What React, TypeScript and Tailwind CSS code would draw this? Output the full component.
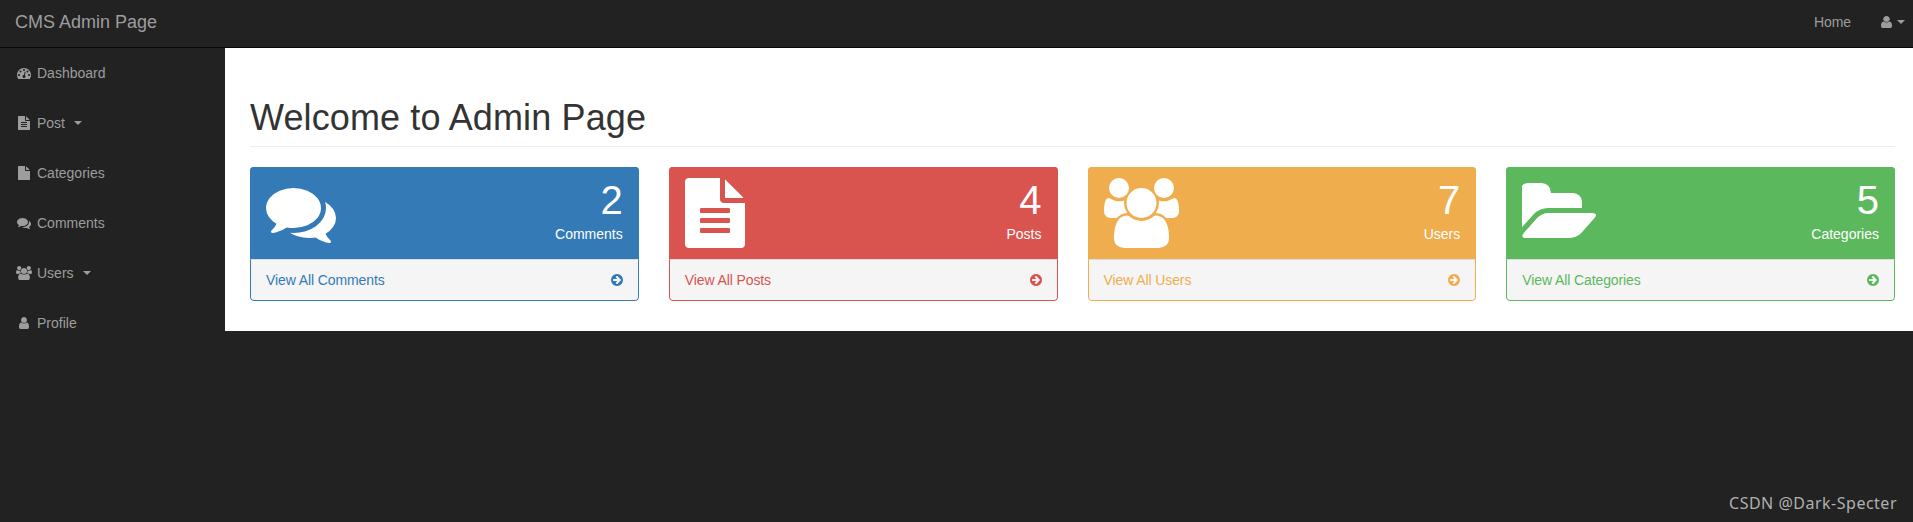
import type { ReactNode } from 'react';

// glyphs from font awesome 4, drawn on the 1792 unit em
const paths = {
  dashboard:
    'M384 1152q0-53-37.5-90.5t-90.5-37.5-90.5 37.5-37.5 90.5 37.5 90.5 90.5 37.5 90.5-37.5 37.5-90.5zm192-448q0-53-37.5-90.5t-90.5-37.5-90.5 37.5-37.5 90.5 37.5 90.5 90.5 37.5 90.5-37.5 37.5-90.5zm428 481l101-382q6-26-7.5-48.5t-38.5-29.5-48 6.5-30 39.5l-101 382q-60 5-107 43.5t-63 98.5q-20 77 20 146t117 89 146-20 89-117q16-60-6-117t-72-91zm660-33q0-53-37.5-90.5t-90.5-37.5-90.5 37.5-37.5 90.5 37.5 90.5 90.5 37.5 90.5-37.5 37.5-90.5zm-640-640q0-53-37.5-90.5t-90.5-37.5-90.5 37.5-37.5 90.5 37.5 90.5 90.5 37.5 90.5-37.5 37.5-90.5zm448 192q0-53-37.5-90.5t-90.5-37.5-90.5 37.5-37.5 90.5 37.5 90.5 90.5 37.5 90.5-37.5 37.5-90.5zm320 448q0 261-141 483-19 29-54 29h-1402q-35 0-54-29-141-221-141-483 0-182 71-348t191-286 286-191 348-71 348 71 286 191 191 286 71 348z',
  fileText:
    'M1596 476q14 14 28 36h-472v-472q22 14 36 28zm-476 164h544v1056q0 40-28 68t-68 28h-1344q-40 0-68-28t-28-68v-1600q0-40 28-68t68-28h800v544q0 40 28 68t68 28zm160 736v-64q0-14-9-23t-23-9h-704q-14 0-23 9t-9 23v64q0 14 9 23t23 9h704q14 0 23-9t9-23zm0-256v-64q0-14-9-23t-23-9h-704q-14 0-23 9t-9 23v64q0 14 9 23t23 9h704q14 0 23-9t9-23zm0-256v-64q0-14-9-23t-23-9h-704q-14 0-23 9t-9 23v64q0 14 9 23t23 9h704q14 0 23-9t9-23z',
  file:
    'M1152 512v-472q22 14 36 28l408 408q14 14 28 36h-472zm-128 32q0 40 28 68t68 28h544v1056q0 40-28 68t-68 28h-1344q-40 0-68-28t-28-68v-1600q0-40 28-68t68-28h800v544z',
  comments:
    'M1408 768q0 139-94 257t-256.5 186.5-353.5 68.5q-86 0-176-16-124 88-278 128-36 9-86 16h-3q-11 0-20.5-8t-11.5-21q-1-3-1-6.5t.5-6.5 2-6l2.5-5 3.5-5.5 4-5 4.5-5 4-4.5q5-6 23-25t26-29.5 22.5-29 25-38.5 20.5-44q-124-72-195-177t-71-224q0-139 94-257t256.5-186.5 353.5-68.5 353.5 68.5 256.5 186.5 94 257zm384 256q0 120-71 224.5t-195 176.5q10 24 20.5 44t25 38.5 22.5 29 26 29.5 23 25q1 1 4 4.5t4.5 5 4 5 3.5 5.5l2.5 5 2 6 .5 6.5-1 6.5q-3 14-13 22t-22 7q-50-7-86-16-154-40-278-128-90 16-176 16-271 0-472-132 58 4 88 4 161 0 309-45t264-129q125-92 192-212t67-254q0-77-23-152 129 71 204 178t75 230z',
  users:
    'M593 896q-162 5-265 128h-134q-82 0-138-40.5t-56-118.5q0-353 124-353 6 0 43.5 21t97.5 42.5 119 21.5q67 0 133-23-5 37-5 66 0 139 81 256zm1071 637q0 120-73 189.5t-194 69.5h-874q-121 0-194-69.5t-73-189.5q0-53 3.5-103.5t14-109 26.5-108.5 43-97.5 62-81 85.5-53.5 111.5-20q10 0 43 21.5t73 48 107 48 135 21.5 135-21.5 107-48 73-48 43-21.5q61 0 111.5 20t85.5 53.5 62 81 43 97.5 26.5 108.5 14 109 3.5 103.5zm-1024-1277q0 106-75 181t-181 75-181-75-75-181 75-181 181-75 181 75 75 181zm704 384q0 159-112.5 271.5t-271.5 112.5-271.5-112.5-112.5-271.5 112.5-271.5 271.5-112.5 271.5 112.5 112.5 271.5zm576 225q0 78-56 118.5t-138 40.5h-134q-103-123-265-128 81-117 81-256 0-29-5-66 66 23 133 23 59 0 119-21.5t97.5-42.5 43.5-21q124 0 124 353zm-128-609q0 106-75 181t-181 75-181-75-75-181 75-181 181-75 181 75 75 181z',
  user:
    'M1536 1399q0 109-62.5 187t-150.5 78h-854q-88 0-150.5-78t-62.5-187q0-85 8.5-160.5t31.5-152 58.5-131 94-89 134.5-34.5q131 128 313 128t313-128q76 0 134.5 34.5t94 89 58.5 131 31.5 152 8.5 160.5zm-256-887q0 159-112.5 271.5t-271.5 112.5-271.5-112.5-112.5-271.5 112.5-271.5 271.5-112.5 271.5 112.5 112.5 271.5z',
  folderOpen:
    'M1815 952q0 31-31 66l-336 396q-43 51-120.5 86.5t-143.5 35.5h-1088q-34 0-60.5-13t-26.5-43q0-31 31-66l336-396q43-51 120.5-86.5t143.5-35.5h1088q34 0 60.5 13t26.5 43zm-343-344v160h-832q-94 0-197 47.5t-164 119.5l-337 396-5 6q0-4-.5-12.5t-.5-12.5v-960q0-92 66-158t158-66h320q92 0 158 66t66 158v32h544q92 0 158 66t66 158z',
  arrowRight:
    'M1285 896q0-27-18-45l-91-91-362-362q-18-18-45-18t-45 18l-91 91q-18 18-18 45t18 45l189 189h-502q-26 0-45 19t-19 45v128q0 26 19 45t45 19h502l-189 189q-19 19-19 45t19 45l91 91q18 18 45 18t45-18l362-362 91-91q18-18 18-45zm251 0q0 209-103 385.5t-279.5 279.5-385.5 103-385.5-103-279.5-279.5-103-385.5 103-385.5 279.5-279.5 385.5-103 385.5 103 279.5 279.5 103 385.5z',
};

type IconName = keyof typeof paths;

// the glyph advance differs per icon, so each one has its own box
const viewBoxes: Record<IconName, string> = {
  dashboard: '0 0 1792 1792',
  fileText: '128 0 1536 1792',
  file: '128 0 1536 1792',
  comments: '0 0 1792 1792',
  users: '0 0 1920 1792',
  user: '256 0 1280 1792',
  folderOpen: '0 0 1815 1792',
  arrowRight: '0 0 1536 1792',
};

function Icon({ name, className }: { name: IconName; className: string }) {
  return (
    <svg viewBox={viewBoxes[name]} preserveAspectRatio="none" fill="currentColor" className={className}>
      <path d={paths[name]} />
    </svg>
  );
}

function Caret() {
  return <span className="h-0 w-0 border-x-4 border-t-4 border-x-transparent border-t-[#9d9d9d]" />;
}

const sideItems: { label: string; icon: IconName; size: string; caret?: boolean }[] = [
  { label: 'Dashboard', icon: 'dashboard', size: 'h-[14px] w-[14px]' },
  { label: 'Post', icon: 'fileText', size: 'h-[14px] w-[12px]', caret: true },
  { label: 'Categories', icon: 'file', size: 'h-[14px] w-[12px]' },
  { label: 'Comments', icon: 'comments', size: 'h-[14px] w-[14px]' },
  { label: 'Users', icon: 'users', size: 'h-[14px] w-[16px]', caret: true },
  { label: 'Profile', icon: 'user', size: 'h-[14px] w-[10px]' },
];

function SideLink({ children, icon, size, caret }: { children: ReactNode; icon: IconName; size: string; caret?: boolean }) {
  return (
    <a className="flex h-[50px] items-center pl-[15px] text-[#9d9d9d]">
      <span className="mr-1 flex w-[18px] justify-center">
        <Icon name={icon} className={size} />
      </span>
      <span>{children}</span>
      {caret && <span className="ml-[9px] flex"><Caret /></span>}
    </a>
  );
}

const cards: { count: number; label: string; link: string; icon: IconName; size: string; head: string; foot: string }[] = [
  { count: 2, label: 'Comments', link: 'View All Comments', icon: 'comments', size: 'h-[70px] w-[70px]', head: 'border-[#337ab7] bg-[#337ab7]', foot: 'border-[#337ab7] text-[#337ab7]' },
  { count: 4, label: 'Posts', link: 'View All Posts', icon: 'fileText', size: 'h-[70px] w-[60px]', head: 'border-[#d9534f] bg-[#d9534f]', foot: 'border-[#d9534f] text-[#d9534f]' },
  { count: 7, label: 'Users', link: 'View All Users', icon: 'users', size: 'h-[70px] w-[75px]', head: 'border-[#f0ad4e] bg-[#f0ad4e]', foot: 'border-[#f0ad4e] text-[#f0ad4e]' },
  { count: 5, label: 'Categories', link: 'View All Categories', icon: 'folderOpen', size: 'h-[70px] w-[74px]', head: 'border-[#5cb85c] bg-[#5cb85c]', foot: 'border-[#5cb85c] text-[#5cb85c]' },
];

export default function App() {
  return (
    <div className="relative flex min-h-screen flex-col bg-[#222222] font-['Liberation_Sans',Arial,sans-serif] text-[14px] leading-5">
      {/* Navbar */}
      <nav className="flex h-[48px] shrink-0 items-center justify-between border-b border-[#080808] bg-[#222222] pb-[3px] pl-[15px] pr-2">
        <a className="text-[18px] text-[#9d9d9d]">CMS Admin Page</a>
        <div className="flex items-center text-[#9d9d9d]">
          <a className="tracking-[-0.1px]">Home</a>
          <span className="ml-[30px] flex items-center">
            <Icon name="user" className="h-[14px] w-[11px]" />
            <span className="ml-[5px] flex"><Caret /></span>
          </span>
        </div>
      </nav>

      <div className="flex items-start">
        {/* Sidebar */}
        <aside className="w-[225px] shrink-0">
          {sideItems.map(item => (
            <SideLink key={item.label} icon={item.icon} size={item.size} caret={item.caret}>{item.label}</SideLink>
          ))}
        </aside>

        {/* Content */}
        <main className="min-w-0 flex-1 bg-white pb-[30px] pl-[25px] pr-[18px] pt-[50px] text-[#333333]">
          <h1 className="border-b border-[#eeeeee] pb-[8px] text-[36px] font-normal leading-[1.1] tracking-[0.12px]">Welcome to Admin Page</h1>
          <div className="mt-5 grid grid-cols-4 gap-[30px]">
            {cards.map(card => (
              <div key={card.label} className="overflow-hidden rounded">
                <div className={`flex h-[92px] justify-between border px-[15px] pt-[10px] text-white ${card.head}`}>
                  <Icon name={card.icon} className={card.size} />
                  <div className="text-right">
                    <div className="text-[40px] leading-[44px]">{card.count}</div>
                    <div className="pt-[2px]">{card.label}</div>
                  </div>
                </div>
                <a className={`flex h-[42px] items-center justify-between rounded-b border border-t-[#dddddd] bg-[#f5f5f5] px-[15px] ${card.foot}`}>
                  <span className="tracking-[-0.1px]">{card.link}</span>
                  <Icon name="arrowRight" className="h-[14px] w-[12px]" />
                </a>
              </div>
            ))}
          </div>
        </main>
      </div>

      <span className="absolute bottom-[8px] right-[16px] font-['Noto_Sans',sans-serif] text-[16px] leading-[22px] tracking-[0.5px] text-[#b0b0b0]">CSDN @Dark-Specter</span>
    </div>
  );
}
